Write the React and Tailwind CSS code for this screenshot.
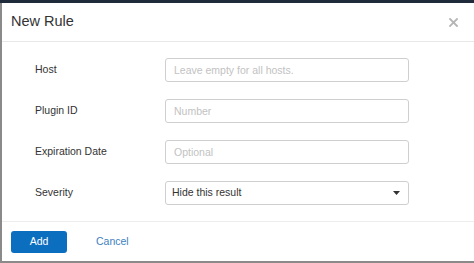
const FIELDS = [
  { label: 'Host', placeholder: 'Leave empty for all hosts.' },
  { label: 'Plugin ID', placeholder: 'Number' },
  { label: 'Expiration Date', placeholder: 'Optional' },
];

function CloseIcon() {
  return (
    <svg width="9" height="9" viewBox="0 0 9 9" className="text-[#b5b5b5]">
      <path d="M1 1L8 8M8 1L1 8" stroke="currentColor" strokeWidth="1.8" strokeLinecap="square" />
    </svg>
  );
}

function FieldRow({ label, children }) {
  return (
    <div className="flex h-[24px] items-center">
      <label className="w-[130px] text-[10.5px] text-[#333]">{label}</label>
      {children}
    </div>
  );
}

export default function App() {
  return (
    <div className="flex h-[263px] w-[474px] flex-col bg-[#8a8a8a] font-['Liberation_Sans',Arial,sans-serif]">
      <div className="h-[3px] bg-[#1f2b3b]" />
      <div className="flex flex-1">
        <div className="w-[2px] bg-[#8a8a8a]" />
        <div className="flex flex-1 flex-col bg-white">
          <div className="flex h-[39px] items-center justify-between border-b border-[#e8e8e8] pl-[9px] pr-[16px]">
            <h1 className="text-[14.5px] text-[#333]">New Rule</h1>
            <CloseIcon />
          </div>

          <div className="flex flex-col gap-[17px] pb-[16px] pl-[33px] pt-[16px]">
            {FIELDS.map((f) => (
              <FieldRow key={f.label} label={f.label}>
                <input
                  type="text"
                  placeholder={f.placeholder}
                  className="h-[24px] w-[244px] rounded-[3px] border border-[#cfcfcf] px-[8px] text-[10.5px] text-[#333] placeholder-[#c2c2c2] outline-none"
                />
              </FieldRow>
            ))}
            <FieldRow label="Severity">
              <div className="flex h-[24px] w-[244px] items-center justify-between rounded-[3px] border border-[#cfcfcf] pl-[6px] pr-[8px] text-[10.5px] text-[#333]">
                <span>Hide this result</span>
                <svg width="7" height="4" viewBox="0 0 7 4">
                  <path d="M0 0H7L3.5 4Z" fill="#333" />
                </svg>
              </div>
            </FieldRow>
          </div>

          <div className="flex flex-1 items-start gap-[29px] border-t border-[#ededed] pl-[9px] pt-[9px]">
            <button
              type="button"
              className="h-[22px] w-[56px] rounded-[3px] bg-[#0b6ebf] text-[10.5px] text-white"
            >
              Add
            </button>
            <button type="button" className="h-[22px] text-[10.5px] text-[#3d7fc0]">
              Cancel
            </button>
          </div>
        </div>
      </div>
      <div className="h-[2px] bg-[#8a8a8a]" />
    </div>
  );
}
